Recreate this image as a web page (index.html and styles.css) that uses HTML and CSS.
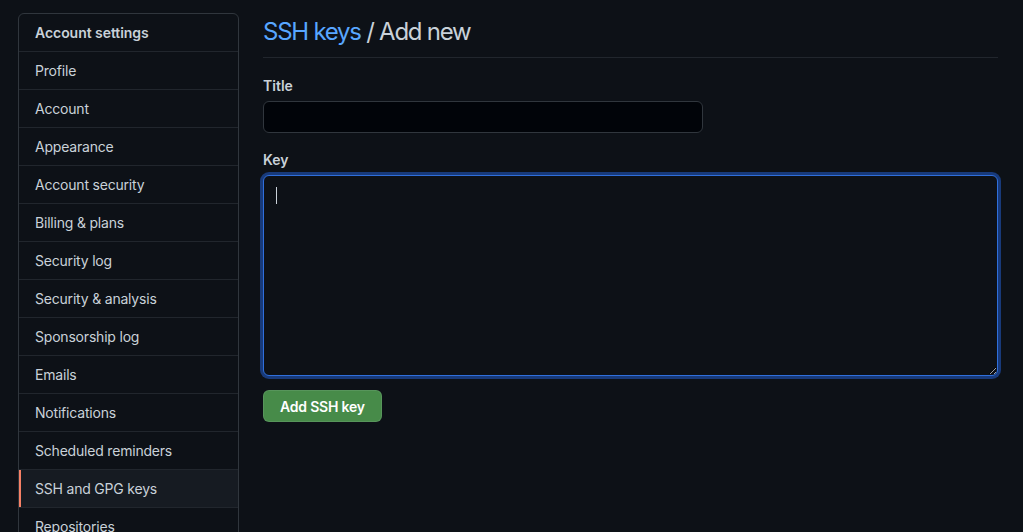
FILE: index.html
```html
<!DOCTYPE html>
<html lang="en">
<head>
<meta charset="utf-8">
<title>SSH keys / Add new</title>
<link rel="stylesheet" href="styles.css">
</head>
<body>
<div class="layout">
  <nav class="menu">
    <div class="menu-heading">Account settings</div>
    <a class="menu-item" href="#">Profile</a>
    <a class="menu-item" href="#">Account</a>
    <a class="menu-item" href="#">Appearance</a>
    <a class="menu-item" href="#">Account security</a>
    <a class="menu-item" href="#">Billing &amp; plans</a>
    <a class="menu-item" href="#">Security log</a>
    <a class="menu-item" href="#">Security &amp; analysis</a>
    <a class="menu-item" href="#">Sponsorship log</a>
    <a class="menu-item" href="#">Emails</a>
    <a class="menu-item" href="#">Notifications</a>
    <a class="menu-item" href="#">Scheduled reminders</a>
    <a class="menu-item selected" href="#">SSH and GPG keys</a>
    <a class="menu-item" href="#">Repositories</a>
  </nav>
  <main class="content">
    <h2 class="subhead"><a class="crumb" href="#">SSH keys</a> / Add new</h2>
    <form class="form">
      <div class="form-group">
        <label class="label" for="title">Title</label>
        <input class="input title-input" id="title" type="text">
      </div>
      <div class="form-group">
        <label class="label" for="key">Key</label>
        <div class="textarea-wrap">
          <textarea class="input key-input focused" id="key"></textarea>
          <span class="caret"></span>
        </div>
      </div>
      <button class="btn-primary" type="button">Add SSH key</button>
    </form>
  </main>
</div>
</body>
</html>
```

FILE: styles.css
```css
* { box-sizing: border-box; }
html, body {
  margin: 0;
  background: #0d1117;
  color: #c9d1d9;
  font-family: Inter, "Liberation Sans", Arial, sans-serif;
  font-size: 14px;
  line-height: 1.5;
  height: 100%;
  overflow: hidden;
}
.layout {
  display: flex;
  gap: 24px;
  padding: 13px 25px 0 18px;
}
.menu {
  width: 221px;
  flex: none;
  border: 1px solid #30363d;
  border-radius: 6px;
  display: flex;
  flex-direction: column;
  overflow: hidden;
}
.menu-heading {
  padding: 8px 16px;
  font-weight: 600;
  color: #c9d1d9;
  border-bottom: 1px solid #21262d;
  letter-spacing: -0.05px;
}
.menu-item {
  padding: 8px 16px;
  color: #c9d1d9;
  text-decoration: none;
  border-bottom: 1px solid #21262d;
  position: relative;
  letter-spacing: -0.2px;
}
.menu-item.selected {
  background: #161b22;
}
.menu-item.selected::before {
  content: "";
  position: absolute;
  left: 0;
  top: 0;
  bottom: 0;
  width: 2px;
  background: #f78166;
}
.content {
  flex: 1;
  min-width: 0;
}
.subhead {
  margin: 0;
  padding-bottom: 8px;
  border-bottom: 1px solid #21262d;
  font-size: 24px;
  font-weight: 400;
  line-height: 36px;
  letter-spacing: -1.25px;
  color: #c9d1d9;
  padding-top: 1px;
  height: 45px;
}
.crumb {
  color: #58a6ff;
  text-decoration: none;
}
.form {
  margin-top: 17px;
  display: flex;
  flex-direction: column;
  align-items: flex-start;
}
.form-group {
  display: flex;
  flex-direction: column;
  width: 100%;
  margin-bottom: 16px;
}
.form-group:last-of-type { margin-bottom: 14px; }
.label {
  font-weight: 600;
  line-height: 21px;
  margin-bottom: 5px;
}
.input {
  font: inherit;
  color: #c9d1d9;
  border: 1px solid #30363d;
  border-radius: 6px;
  padding: 5px 12px;
  outline: none;
}
.title-input {
  width: 440px;
  height: 32px;
  background: #010409;
}
.textarea-wrap {
  position: relative;
  width: 100%;
}
.key-input {
  display: block;
  width: 100%;
  height: 201px;
  background: #0d1117;
  resize: vertical;
  padding: 10px 12px;
}
.key-input.focused {
  border-color: #2f6fdc;
  box-shadow: 0 0 0 3px #183a7a;
}
.caret {
  position: absolute;
  left: 13px;
  top: 12px;
  width: 1px;
  height: 17px;
  background: #c9d1d9;
}
.btn-primary {
  font: inherit;
  font-weight: 600;
  letter-spacing: -0.2px;
  white-space: nowrap;
  color: #ffffff;
  background: #478b49;
  border: 1px solid rgba(240, 246, 252, 0.1);
  border-radius: 6px;
  height: 32px;
  padding: 0 16px;
}
```
